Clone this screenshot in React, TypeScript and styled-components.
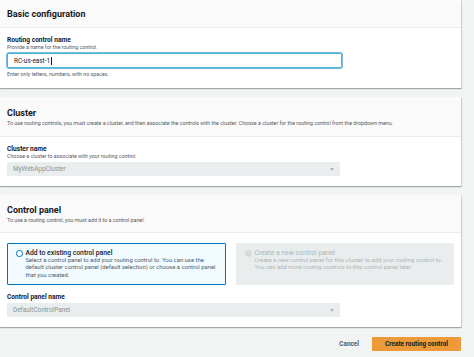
import React from 'react'
import styled, { createGlobalStyle } from 'styled-components'

const GlobalStyle = createGlobalStyle`
  html, body {
    margin: 0;
    padding: 0;
    background: #f2f3f3;
    font-family: Roboto, "Liberation Sans", Arial, sans-serif;
    color: #16191f;
  }
  * { box-sizing: border-box; }
`

const Page = styled.div`
  width: 461px;
  display: flex;
  flex-direction: column;
  gap: 9px;
`

const Card = styled.section`
  background: #fff;
  box-shadow: 0 1px 1px rgba(0, 28, 36, 0.25), 1px 1px 1px rgba(0, 28, 36, 0.12);
`

const CardHeader = styled.header<{ $height: number }>`
  height: ${(p) => p.$height}px;
  background: #fafafa;
  border-bottom: 1px solid #eaeded;
  padding: 0 7px;
  display: flex;
  flex-direction: column;
  justify-content: center;
`

const Title = styled.h2`
  margin: 0;
  font-size: 9px;
  font-weight: 700;
  line-height: 12px;
`

const HeaderDesc = styled.p`
  margin: 1px 0 0;
  font-size: 5.3px;
  line-height: 7px;
  color: #545b64;
`

const CardBody = styled.div`
  padding: 8px 7px 10px;
  display: flex;
  flex-direction: column;
`

const Label = styled.div`
  font-size: 6.6px;
  font-weight: 700;
  line-height: 8px;
`

const Desc = styled.div<{ $gap?: number }>`
  margin-top: ${(p) => p.$gap ?? 0}px;
  font-size: 5.3px;
  line-height: 7px;
  color: #545b64;
`

const Input = styled.div`
  margin-top: 2px;
  width: 335px;
  height: 15px;
  border: 1px solid #44b9d6;
  box-shadow: 0 0 0 0.5px #0073bb;
  border-radius: 1px;
  padding: 0 6px;
  display: flex;
  align-items: center;
  font-size: 6.4px;
  color: #16191f;
`

const Caret = styled.span`
  display: inline-block;
  width: 0.7px;
  height: 8px;
  background: #16191f;
  margin-left: 0.5px;
`

const Select = styled.div`
  margin-top: 2px;
  width: 333px;
  height: 14px;
  background: #eaeded;
  border-radius: 1px;
  padding: 0 6px;
  display: flex;
  align-items: center;
  justify-content: space-between;
  font-size: 6.4px;
  color: #879596;
`

const Arrow = styled.span`
  width: 0;
  height: 0;
  border-left: 2.5px solid transparent;
  border-right: 2.5px solid transparent;
  border-top: 3px solid #aab7b8;
`

const TileRow = styled.div`
  display: grid;
  grid-template-columns: 219px 218px;
  gap: 10px;
  margin-top: 2px;
  margin-bottom: 8px;
`

const Tile = styled.div<{ $selected?: boolean }>`
  height: 42px;
  padding: 5px 8px;
  border: 1px solid ${(p) => (p.$selected ? '#0073bb' : '#eaeded')};
  background: ${(p) => (p.$selected ? '#f1faff' : '#eaeded')};
  border-radius: 1px;
  display: flex;
  gap: 3px;
`

const Radio = styled.span<{ $selected?: boolean }>`
  flex: none;
  width: 6.5px;
  height: 6.5px;
  margin-top: 1px;
  border-radius: 50%;
  border: ${(p) => (p.$selected ? '1.8px solid #0073bb' : '1px solid #d5dbdb')};
  background: ${(p) => (p.$selected ? '#fff' : '#d5dbdb')};
`

const TileTitle = styled.div<{ $disabled?: boolean }>`
  font-size: 6.8px;
  line-height: 8px;
  font-weight: ${(p) => (p.$disabled ? 400 : 500)};
  color: ${(p) => (p.$disabled ? '#aab7b8' : '#16191f')};
`

const TileDesc = styled.div<{ $disabled?: boolean }>`
  font-size: 5.9px;
  line-height: 7.3px;
  color: ${(p) => (p.$disabled ? '#aab7b8' : '#545b64')};
`

const Footer = styled.footer`
  display: flex;
  justify-content: flex-end;
  align-items: center;
  gap: 13px;
  padding-top: 1px;
`

const LinkButton = styled.button`
  border: none;
  background: none;
  padding: 0;
  font-family: inherit;
  font-size: 6.4px;
  font-weight: 700;
  color: #545b64;
`

const PrimaryButton = styled.button`
  width: 89px;
  height: 14px;
  border: none;
  border-radius: 1px;
  background: #ec9a3a;
  font-family: inherit;
  font-size: 6.4px;
  font-weight: 700;
  color: #16191f;
  padding: 0;
`

export default function App() {
  return (
    <>
      <GlobalStyle />
      <Page>
        <Card>
          <CardHeader $height={28}>
            <Title>Basic configuration</Title>
          </CardHeader>
          <CardBody>
            <Label>Routing control name</Label>
            <Desc>Provide a name for the routing control.</Desc>
            <Input>
              RC-us-east-1
              <Caret />
            </Input>
            <Desc $gap={3}>Enter only letters, numbers, with no spaces.</Desc>
          </CardBody>
        </Card>

        <Card>
          <CardHeader $height={40}>
            <Title>Cluster</Title>
            <HeaderDesc>
              To use routing controls, you must create a cluster, and then associate the controls
              with the cluster. Choose a cluster for the routing control from the dropdown menu.
            </HeaderDesc>
          </CardHeader>
          <CardBody>
            <Label>Cluster name</Label>
            <Desc>Choose a cluster to associate with your routing control.</Desc>
            <Select>
              MyWebAppCluster
              <Arrow />
            </Select>
          </CardBody>
        </Card>

        <Card>
          <CardHeader $height={38}>
            <Title>Control panel</Title>
            <HeaderDesc>To use a routing control, you must add it to a control panel.</HeaderDesc>
          </CardHeader>
          <CardBody>
            <TileRow>
              <Tile $selected>
                <Radio $selected />
                <div>
                  <TileTitle>Add to existing control panel</TileTitle>
                  <TileDesc>
                    Select a control panel to add your routing control to. You can use the default
                    cluster control panel (default selection) or choose a control panel that you
                    created.
                  </TileDesc>
                </div>
              </Tile>
              <Tile>
                <Radio />
                <div>
                  <TileTitle $disabled>Create a new control panel</TileTitle>
                  <TileDesc $disabled>
                    Create a new control panel for this cluster to add your routing control to. You
                    can add more routing controls to this control panel later.
                  </TileDesc>
                </div>
              </Tile>
            </TileRow>
            <Label>Control panel name</Label>
            <Select>
              DefaultControlPanel
              <Arrow />
            </Select>
          </CardBody>
        </Card>

        <Footer>
          <LinkButton>Cancel</LinkButton>
          <PrimaryButton>Create routing control</PrimaryButton>
        </Footer>
      </Page>
    </>
  )
}
